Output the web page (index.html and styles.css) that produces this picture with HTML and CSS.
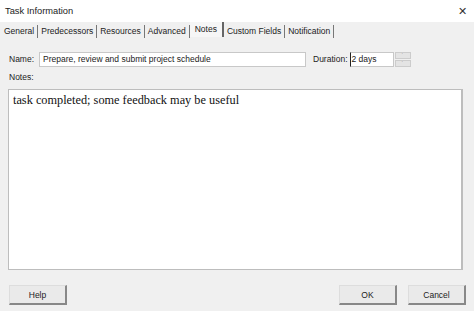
FILE: index.html
```html
<!DOCTYPE html>
<html lang="en">
<head>
    <meta charset="UTF-8">
    <title>Task Information</title>
    <link rel="stylesheet" href="styles.css">
</head>
<body>
    <div class="dialog">
        <div class="titlebar">
            <span class="title">Task Information</span>
            <span class="close">&#x2715;</span>
        </div>

        <div class="tabs">
            <span class="tab">General</span>
            <span class="tab">Predecessors</span>
            <span class="tab">Resources</span>
            <span class="tab">Advanced</span>
            <span class="tab active">Notes</span>
            <span class="tab">Custom Fields</span>
            <span class="tab">Notification</span>
        </div>

        <div class="content">
            <div class="row">
                <label class="lbl">Name:</label>
                <div class="field name-field">Prepare, review and submit project schedule</div>
                <label class="lbl dur-lbl">Duration:</label>
                <div class="field dur-field">2 days</div>
                <div class="spinner">
                    <span class="spin-btn">&#729;</span>
                    <span class="spin-btn">&#729;</span>
                </div>
            </div>
            <div class="notes-lbl">Notes:</div>
            <div class="notes">task completed; some feedback may be useful</div>
        </div>

        <div class="buttons">
            <button class="btn">Help</button>
            <div class="spacer"></div>
            <button class="btn">OK</button>
            <button class="btn">Cancel</button>
        </div>
    </div>
</body>
</html>
```

FILE: styles.css
```css
body {
    margin: 0;
    font-family: "Liberation Sans", Arial, sans-serif;
    background-color: #f0f0f0;
}
.dialog {
    width: 474px;
    height: 311px;
    display: flex;
    flex-direction: column;
    background-color: #f0f0f0;
    color: #222;
    font-size: 8.5px;
}
.titlebar {
    height: 22px;
    background: #fff;
    display: flex;
    align-items: center;
    justify-content: space-between;
    padding: 0 7px 0 5px;
    font-size: 9.3px;
}
.close {
    font-size: 11px;
    color: #333;
}
.tabs {
    display: flex;
    align-items: center;
    height: 17px;
    padding: 0 0 0 1px;
}
.tab {
    padding: 0 3px;
    border-right: 1px solid #777;
    line-height: 13px;
    margin-top: 1px;
}
.tab.active {
    background: #f6f6f6;
    line-height: 15px;
    margin-top: -3px;
    padding: 0 5px;
    border-right: 2px solid #666;
}
.content {
    padding: 12px 11px 0 8px;
}
.row {
    display: flex;
    align-items: center;
    height: 16px;
}
.lbl {
    width: 30px;
    padding-left: 1px;
}
.field {
    background: #fff;
    border: 1px solid #c8c8c8;
    height: 13px;
    line-height: 13px;
    padding: 0 3px;
    flex-shrink: 0;
}
.name-field {
    width: 259px;
}
.dur-lbl {
    width: auto;
    margin-left: 6px;
    margin-right: 2px;
}
.dur-field {
    width: 38px;
    border-left: 1px solid #222;
    padding-left: 1px;
}
.spinner {
    display: flex;
    flex-direction: column;
    width: 16px;
    height: 15px;
    margin-left: 1px;
    gap: 1px;
}
.spin-btn {
    flex: 1;
    background: #e4e4e4;
    border: 1px solid #ccc;
    font-size: 6px;
    line-height: 5px;
    text-align: center;
    color: #666;
}
.notes-lbl {
    margin: 5px 0 0 1px;
    height: 17px;
}
.notes {
    height: 172px;
    background: #fff;
    border: 1px solid #bdbdbd;
    border-right: 2px solid #bdbdbd;
    padding: 3px 4px 4px;
    font-family: "Liberation Serif", serif;
    font-size: 12.3px;
    color: #111;
}
.buttons {
    display: flex;
    padding: 15px 8px 0 9px;
    gap: 11px;
}
.spacer {
    flex: 1;
}
.btn {
    width: 58px;
    height: 20px;
    background: #eaeaea;
    border: 1px solid #ddd;
    border-right: 2px solid #888;
    border-bottom: 2px solid #888;
    font-family: "Liberation Sans", Arial, sans-serif;
    font-size: 8.5px;
    color: #222;
    padding: 0;
}
```
